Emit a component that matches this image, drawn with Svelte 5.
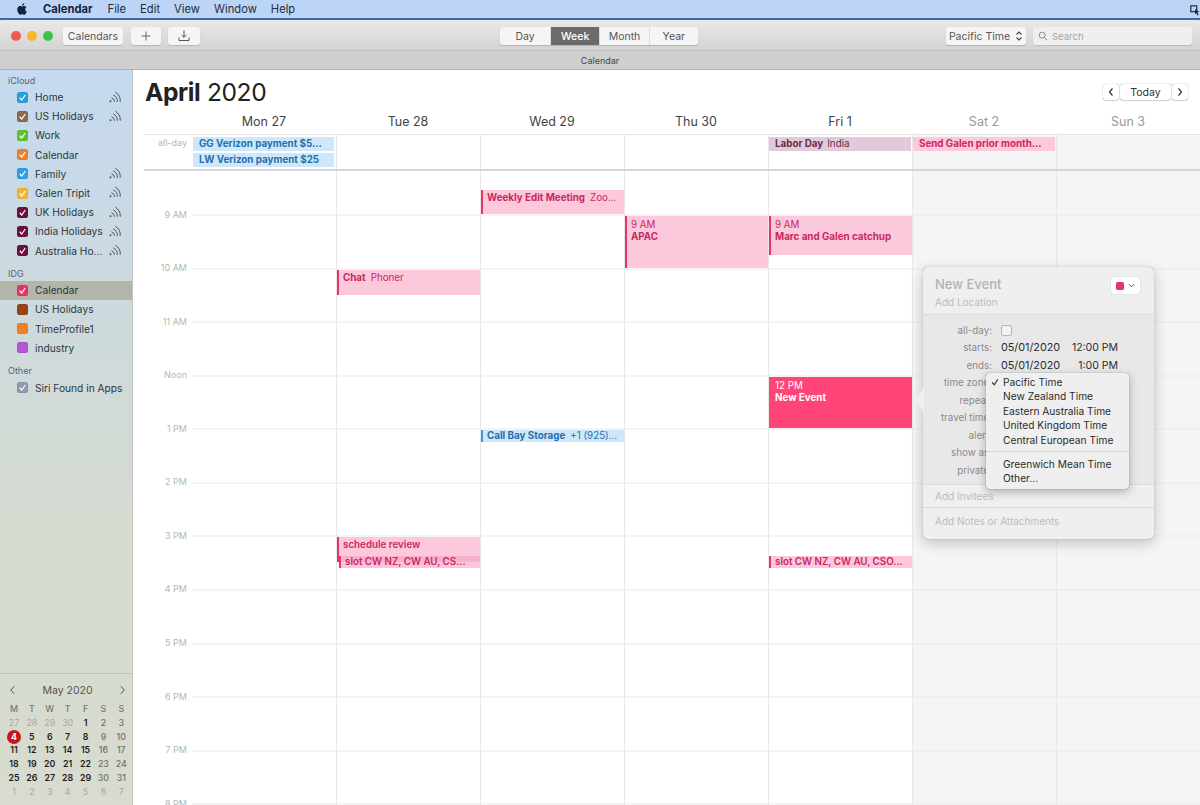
<script>
  const menus = ["File", "Edit", "View", "Window", "Help"];
  const groups = [
    { name: "iCloud", items: [
      { label: "Home", color: "#2a9fe0", on: true, feed: true },
      { label: "US Holidays", color: "#8a6a4a", on: true, feed: true },
      { label: "Work", color: "#5fc22f", on: true },
      { label: "Calendar", color: "#ee8230", on: true },
      { label: "Family", color: "#2f9fe8", on: true, feed: true },
      { label: "Galen Tripit", color: "#f3b52f", on: true, feed: true },
      { label: "UK Holidays", color: "#6d0f3f", on: true, feed: true },
      { label: "India Holidays", color: "#6d0f3f", on: true, feed: true },
      { label: "Australia Ho...", color: "#6d0f3f", on: true, feed: true }
    ]},
    { name: "IDG", items: [
      { label: "Calendar", color: "#e8336d", on: true, selected: true },
      { label: "US Holidays", color: "#9a4312" },
      { label: "TimeProfile1", color: "#f47f20" },
      { label: "industry", color: "#b455d6" }
    ]},
    { name: "Other", items: [
      { label: "Siri Found in Apps", color: "#8e9bb5", on: true }
    ]}
  ];

  const miniHead = ["M", "T", "W", "T", "F", "S", "S"];
  const miniDays = [
    27,28,29,30,1,2,3, 4,5,6,7,8,9,10, 11,12,13,14,15,16,17,
    18,19,20,21,22,23,24, 25,26,27,28,29,30,31, 1,2,3,4,5,6,7
  ];
  function miniClass(i) {
    if (i < 4 || i > 34) return "other";
    if (i === 7) return "today";
    return i % 7 > 4 ? "wknd" : "cur";
  }

  const hourLabels = ["9 AM", "10 AM", "11 AM", "Noon", "1 PM", "2 PM", "3 PM", "4 PM", "5 PM", "6 PM", "7 PM", "8 PM"];
  const HOUR = 53.57;
  const top = (h) => (h - 8) * HOUR - 10 + 1.5;

  const days = [
    { name: "Mon 27", allDay: [
      { title: "GG Verizon payment $5...", tone: "blue" },
      { title: "LW Verizon payment $25", tone: "blue" }
    ], events: [] },
    { name: "Tue 28", allDay: [], events: [
      { start: 10, h: 25, title: "Chat", note: "Phoner" },
      { start: 15, h: 25, title: "schedule review", plain: true },
      { start: 15.35, h: 12, title: "slot CW NZ, CW AU, CS...", plain: true, nested: true }
    ] },
    { name: "Wed 29", allDay: [], events: [
      { start: 8.51, h: 24, title: "Weekly Edit Meeting", note: "Zoo..." },
      { start: 13, h: 12, title: "Call Bay Storage", note: "+1 (925)...", tone: "blue", thin: true }
    ] },
    { name: "Thu 30", allDay: [], events: [
      { start: 9, h: 52, title: "APAC", time: "9 AM" }
    ] },
    { name: "Fri 1", allDay: [
      { title: "Labor Day", note: "India", tone: "plum" }
    ], events: [
      { start: 9, h: 39, title: "Marc and Galen catchup", time: "9 AM" },
      { start: 12, h: 51, title: "New Event", time: "12 PM", tone: "active" },
      { start: 15.35, h: 12, title: "slot CW NZ, CW AU, CSO...", plain: true, thin: true }
    ] },
    { name: "Sat 2", weekend: true, allDay: [
      { title: "Send Galen prior month...", tone: "pink" }
    ], events: [] },
    { name: "Sun 3", weekend: true, allDay: [], events: [] }
  ];

  const formRows = [
    { label: "all-day:", check: true },
    { label: "starts:", date: "05/01/2020", time: "12:00 PM" },
    { label: "ends:", date: "05/01/2020", time: "1:00 PM" },
    { label: "time zone:" },
    { label: "repeat:" },
    { label: "travel time:" },
    { label: "alert:" },
    { label: "show as:" },
    { label: "private:" }
  ];
  const zonesA = ["Pacific Time", "New Zealand Time", "Eastern Australia Time", "United Kingdom Time", "Central European Time"];
  const zonesB = ["Greenwich Mean Time", "Other..."];
</script>

<div class="app">
  <header class="menubar">
    <svg class="apple" viewBox="0 0 24 24"><path d="M18.71 19.5c-.83 1.24-1.71 2.45-3.05 2.47-1.34.03-1.77-.79-3.29-.79-1.53 0-2 .77-3.27.82-1.31.05-2.3-1.32-3.14-2.53C4.25 17 2.94 12.45 4.7 9.39c.87-1.52 2.43-2.48 4.12-2.51 1.28-.02 2.5.87 3.29.87.78 0 2.26-1.07 3.81-.91.65.03 2.47.26 3.64 1.98-.09.06-2.17 1.28-2.15 3.81.03 3.02 2.65 4.03 2.68 4.04-.03.07-.42 1.44-1.38 2.83M13 3.5c.73-.83 1.94-1.46 2.94-1.5.13 1.17-.34 2.35-1.04 3.19-.69.85-1.83 1.51-2.95 1.42-.15-1.15.41-2.35 1.05-3.11z"/></svg>
    <b class="appname">Calendar</b>
    {#each menus as m}
      <span>{m}</span>
    {/each}
    <svg class="tray" viewBox="0 0 12 14"><rect x="1" y="2" width="7" height="7" fill="none" stroke="#2c3e55" stroke-width="1.6"/><path d="M6 6l5 3-2 1 1.500 3-1.500.6-1.400-3L6 12z" fill="#1d2a3c"/></svg>
  </header>

  <div class="window">
    <div class="toolbar">
      <div class="lights">
        <i class="red"></i><i class="yellow"></i><i class="green"></i>
      </div>
      <button class="btn calendars">Calendars</button>
      <button class="btn icon plus" aria-label="Add">
        <svg viewBox="0 0 12 12"><path d="M6 1.500v9M1.500 6h9" stroke="#666" fill="none" stroke-width="1"/></svg>
      </button>
      <button class="btn icon dl" aria-label="Import">
        <svg viewBox="0 0 12 12"><path d="M6 .5v6.800M3.700 5L6 7.300 8.300 5M1 7.500v3h10v-3" stroke="#555" fill="none" stroke-width="1"/></svg>
      </button>
      <div class="segments">
        <span class="sday">Day</span><span class="on">Week</span><span>Month</span><span>Year</span>
      </div>
      <button class="btn zone">Pacific Time
        <svg viewBox="0 0 8 12"><path d="M1.500 4.500L4 2l2.500 2.500M1.500 7.500L4 10l2.500-2.500" stroke="#444" fill="none" stroke-width="1.100"/></svg>
      </button>
      <div class="search">
        <svg viewBox="0 0 12 12"><circle cx="5" cy="5" r="3.600" stroke="#777" fill="none"/><path d="M7.700 7.700L11 11" stroke="#777" fill="none" stroke-width="1.100"/></svg>
        Search
      </div>
    </div>
    <div class="tabbar">Calendar</div>

    <div class="content">
      <aside class="sidebar">
        {#each groups as g}
          <div class="group">{g.name}</div>
          {#each g.items as item}
            <div class="cal" class:selected={item.selected}>
              <span class="box" style="background:{item.color}">
                {#if item.on}
                  <svg viewBox="0 0 12 12"><path d="M3 6.300l2.200 2.400L9 3.300" stroke="#fff" fill="none" stroke-width="1.300"/></svg>
                {/if}
              </span>
              <span class="calname">{item.label}</span>
              {#if item.feed}
                <svg class="feed" viewBox="0 0 12 12">
                  <circle cx="1.500" cy="10.300" r="1" fill="#555"/>
                  <path d="M2.500 6.800A4 4 0 0 1 5.500 10.800M4.300 3.900A7 7 0 0 1 8.300 10.800M6.300 1.200A10 10 0 0 1 11.200 10.800" stroke="#555" fill="none" stroke-width="1"/>
                </svg>
              {/if}
            </div>
          {/each}
        {/each}

        <div class="mini">
          <div class="minititle">
            <svg viewBox="0 0 8 12"><path d="M6 1.500L2 6l4 4.500" stroke="#555" fill="none" stroke-width="1.200"/></svg>
            <span>May 2020</span>
            <svg viewBox="0 0 8 12"><path d="M2 1.500L6 6l-4 4.500" stroke="#555" fill="none" stroke-width="1.200"/></svg>
          </div>
          <div class="minigrid">
            {#each miniHead as d}
              <span class="head">{d}</span>
            {/each}
            {#each miniDays as d, i}
              <span class={miniClass(i)}>{d}</span>
            {/each}
          </div>
        </div>
      </aside>

      <main class="main">
        <div class="titlerow">
          <h1><b>April</b> 2020</h1>
          <div class="nav">
            <button aria-label="Previous"><svg viewBox="0 0 8 12"><path d="M5.500 2.500L2.500 6l3 3.500" stroke="#333" fill="none" stroke-width="1.200"/></svg></button>
            <button class="today">Today</button>
            <button aria-label="Next"><svg viewBox="0 0 8 12"><path d="M2.500 2.500L5.500 6l-3 3.500" stroke="#333" fill="none" stroke-width="1.200"/></svg></button>
          </div>
        </div>

        <div class="dayrow">
          {#each days as d}
            <div class="dayname" class:weekend={d.weekend}>{d.name}</div>
          {/each}
        </div>

        <div class="allday">
          <div class="gutterlabel">all-day</div>
          {#each days as d}
            <div class="allcol" class:weekend={d.weekend}>
              {#each d.allDay as e}
                <div class="allevent {e.tone}"><b>{e.title}</b>{#if e.note}<span>{e.note}</span>{/if}</div>
              {/each}
            </div>
          {/each}
        </div>

        <div class="timegrid">
          <div class="gutter">
            {#each hourLabels as h}
              <div class="hour">{h}</div>
            {/each}
          </div>
          {#each days as d}
            <div class="col" class:weekend={d.weekend}>
              {#each d.events as e}
                <div
                  class="event {e.tone || 'pink'}"
                  class:thin={e.thin}
                  class:nested={e.nested}
                  style="top:{top(e.start)}px;height:{e.h}px"
                >
                  {#if e.time}<div class="evtime">{e.time}</div>{/if}
                  <div class="evline" class:plain={e.plain}><b>{e.title}</b>{#if e.note}<span>{e.note}</span>{/if}</div>
                </div>
              {/each}
            </div>
          {/each}
        </div>
      </main>
    </div>
  </div>

  <section class="popover">
    <svg class="tip" viewBox="0 0 11 28"><path d="M11 0C9 4 7 9 .5 14 7 19 9 24 11 28z" fill="#efefef"/></svg>
    <div class="pophead">
      <div class="poptitle">New Event</div>
      <div class="poploc">Add Location</div>
      <div class="colorbtn">
        <i></i>
        <svg viewBox="0 0 8 6"><path d="M1 1.500L4 4.500 7 1.500" stroke="#444" fill="none" stroke-width="1.100"/></svg>
      </div>
    </div>
    <div class="form">
      {#each formRows as r}
        <div class="formrow">
          <span class="flabel">{r.label}</span>
          {#if r.check}<i class="checkbox"></i>{/if}
          {#if r.date}<span class="fdate">{r.date}</span><span class="ftime">{r.time}</span>{/if}
        </div>
      {/each}
    </div>
    <div class="popfoot">Add Invitees</div>
    <div class="popfoot last">Add Notes or Attachments</div>

    <div class="dropdown">
      {#each zonesA as z, i}
        <div class="zoneitem">{#if i === 0}<svg viewBox="0 0 10 10"><path d="M1.500 5.500L4 8.500 8.500 1.500" stroke="#222" fill="none" stroke-width="1.300"/></svg>{/if}{z}</div>
      {/each}
      <hr />
      {#each zonesB as z}
        <div class="zoneitem">{z}</div>
      {/each}
    </div>
  </section>
</div>

<style>
  :global(body) {
    margin: 0;
    font-family: Inter, "Liberation Sans", sans-serif;
    background: #bcd5f5;
  }
  button {
    font-family: inherit;
  }
  .app {
    position: relative;
    width: 1200px;
    height: 805px;
    overflow: hidden;
    display: flex;
    flex-direction: column;
    background: #bcd5f5;
  }

  /* menu bar */
  .menubar {
    height: 18px;
    flex: none;
    display: flex;
    align-items: center;
    gap: 14px;
    padding-left: 15px;
    font-size: 11.200px;
    color: #1f2d42;
    background: #bcd5f6;
    border-bottom: 2px solid #3f68ab;
  }
  .apple {
    width: 14px;
    height: 14px;
    fill: #16233a;
  }
  .appname {
    font-weight: 700;
    color: #14233c;
    margin-right: 1px;
  }
  .tray {
    position: absolute;
    right: 0;
    top: 4px;
    width: 10px;
    height: 12px;
  }

  /* window */
  .window {
    flex: 1;
    min-height: 0;
    display: flex;
    flex-direction: column;
    border-radius: 4px 4px 0 0;
    overflow: hidden;
    background: #fff;
  }
  .toolbar {
    height: 31px;
    flex: none;
    box-sizing: border-box;
    display: flex;
    align-items: center;
    padding: 2px 8px 0 11px;
    background: linear-gradient(#e9e9e9, #d3d3d3);
    border-bottom: 1px solid #bdbdbd;
  }
  .lights {
    display: flex;
    gap: 6px;
    margin-right: 10px;
  }
  .lights i {
    width: 10px;
    height: 10px;
    border-radius: 50%;
  }
  .red { background: #ee5a52; }
  .yellow { background: #f5b62e; }
  .green { background: #3fc14a; }
  .btn {
    height: 18px;
    border: 0;
    border-radius: 3px;
    background: #f5f5f5;
    box-shadow: 0 1px 1px rgba(0,0,0,.16);
    font-size: 10.500px;
    color: #555;
    padding: 0;
    display: flex;
    align-items: center;
    justify-content: center;
  }
  .calendars { width: 60px; }
  .icon svg { width: 12px; height: 12px; }
  .plus { width: 30px; margin-left: 8px; }
  .dl { width: 32px; margin-left: 7px; }
  .segments {
    margin-left: 300px;
    display: flex;
    height: 18px;
    width: 198px;
    border-radius: 3px;
    overflow: hidden;
    background: #f5f5f5;
    box-shadow: 0 1px 1px rgba(0,0,0,.16);
    font-size: 10.500px;
    color: #555;
  }
  .segments span {
    flex: 1;
    display: flex;
    align-items: center;
    justify-content: center;
    border-right: 1px solid #dcdcdc;
  }
  .segments span:last-child { border-right: 0; }
  .segments .sday { flex: none; width: 51px; box-sizing: border-box; }
  .segments .on {
    background: #6b6b6b;
    color: #fff;
    font-weight: 500;
  }
  .zone {
    width: 80px;
    margin-left: 248px;
    gap: 5px;
  }
  .zone svg { width: 8px; height: 12px; }
  .search {
    width: 159px;
    height: 18px;
    margin-left: 7px;
    box-sizing: border-box;
    display: flex;
    align-items: center;
    gap: 4px;
    padding-left: 5px;
    border-radius: 3px;
    background: #efefef;
    box-shadow: 0 1px 1px rgba(0,0,0,.12);
    font-size: 9.500px;
    color: #a5a5a5;
  }
  .search svg { width: 10px; height: 10px; }
  .tabbar {
    height: 18px;
    flex: none;
    display: flex;
    align-items: center;
    justify-content: center;
    font-size: 9px;
    color: #444;
    background: #cfcfcf;
    border-bottom: 1px solid #b0b0b0;
  }
  .content {
    flex: 1;
    min-height: 0;
    display: flex;
  }

  /* sidebar */
  .sidebar {
    width: 133px;
    flex: none;
    box-sizing: border-box;
    padding-top: 3.500px;
    display: flex;
    flex-direction: column;
    background: linear-gradient(#c5daf0 0, #cdd9dd 240px, #d5dbd0 450px, #d8dbcf 100%);
    border-right: 1px solid #c4c4c0;
    color: #2c3540;
  }
  .group {
    height: 14px;
    line-height: 14px;
    padding-left: 8px;
    font-size: 9px;
    color: #5a6470;
    margin-top: 6.500px;
  }
  .group:first-child { margin-top: 0; }
  .cal {
    height: 19.200px;
    flex: none;
    display: flex;
    align-items: center;
    padding-left: 17px;
    font-size: 10.200px;
    position: relative;
  }
  .cal.selected { background: #b4b5a9; }
  .box {
    width: 11px;
    height: 11px;
    flex: none;
    border-radius: 2.500px;
    margin-right: 7px;
    display: flex;
    box-shadow: inset 0 0 0 1px rgba(0,0,0,.05);
  }
  .box svg { width: 11px; height: 11px; }
  .calname { white-space: nowrap; }
  .feed {
    position: absolute;
    left: 109px;
    top: 3px;
    width: 12px;
    height: 12px;
  }

  /* mini month */
  .mini {
    margin-top: auto;
    height: 132px;
    box-sizing: border-box;
    border-top: 1px solid #c2c4b8;
    padding: 8px 0 0 5px;
  }
  .minititle {
    height: 16px;
    width: 125px;
    padding: 0 4px;
    box-sizing: border-box;
    display: flex;
    align-items: center;
    justify-content: space-between;
    font-size: 10.500px;
    color: #555;
    margin-bottom: 4px;
  }
  .minititle svg { width: 7px; height: 10px; }
  .minigrid {
    display: grid;
    grid-template-columns: repeat(7, 17.900px);
    grid-auto-rows: 13.800px;
    font-size: 8.800px;
    text-align: center;
    line-height: 13.800px;
  }
  .minigrid .head { color: #777; font-weight: 500; }
  .minigrid .cur { color: #1c1c1c; font-weight: 600; }
  .minigrid .wknd { color: #6f6f6f; font-weight: 500; }
  .minigrid .other { color: #a8a8a2; }
  .minigrid .today {
    justify-self: center;
    width: 14px;
    height: 14px;
    line-height: 14px;
    border-radius: 50%;
    background: #c8161d;
    color: #fff;
    font-weight: 700;
  }

  /* calendar */
  .main {
    flex: 1;
    min-width: 0;
    display: flex;
    flex-direction: column;
  }
  .titlerow {
    height: 38px;
    flex: none;
    display: flex;
    justify-content: space-between;
    align-items: flex-start;
    padding: 0 12px;
  }
  h1 {
    margin: 6px 0 0;
    font-size: 24.600px;
    line-height: 32px;
    font-weight: 400;
    color: #222;
    letter-spacing: -.4px;
  }
  h1 b { font-weight: 700; }
  .nav {
    display: flex;
    gap: 1px;
    margin-top: 14px;
  }
  .nav button {
    width: 16px;
    height: 16px;
    padding: 0;
    border: 0;
    border-radius: 3px;
    background: #fff;
    box-shadow: 0 0 1px rgba(0,0,0,.5), 0 1px 1px rgba(0,0,0,.15);
    font-size: 10.500px;
    color: #333;
    display: flex;
    align-items: center;
    justify-content: center;
  }
  .nav svg { width: 8px; height: 12px; }
  .nav .today { width: 51px; }
  .dayrow {
    height: 26px;
    flex: none;
    display: flex;
    padding-left: 59px;
  }
  .dayname {
    width: 144px;
    text-align: center;
    font-size: 12.500px;
    line-height: 27px;
    color: #444;
  }
  .dayname.weekend { color: #999; }
  .allday {
    height: 34px;
    flex: none;
    display: flex;
    margin-left: 11px;
    border-top: 1px solid #e6e6e6;
    border-bottom: 2px solid #d4d4d4;
  }
  .gutterlabel {
    width: 48px;
    flex: none;
    text-align: right;
    padding-right: 5px;
    box-sizing: border-box;
    font-size: 9px;
    line-height: 16px;
    color: #b5b5b5;
  }
  .allcol {
    width: 144px;
    flex: none;
    box-sizing: border-box;
    padding: 2px 1px 0 0;
    display: flex;
    flex-direction: column;
    gap: 2px;
    border-left: 1px solid #e8e8e8;
  }
  .gutterlabel + .allcol {
    border-left: 0;
    padding: 2px 2px 0 1px;
  }
  .allcol.weekend, .col.weekend { background-color: #f5f5f5; }
  .allevent {
    height: 14px;
    line-height: 14px;
    padding-left: 6px;
    font-size: 9.800px;
    white-space: nowrap;
    overflow: hidden;
  }
  .allevent span { font-weight: 400; margin-left: 4px; }
  .allevent.blue { background: #cfe7fb; color: #2470aa; }
  .allevent.plum { background: #e1cbd8; color: #6a2b50; }
  .allevent.pink { background: #fbc8dc; color: #c9285f; }

  .timegrid {
    flex: 1;
    min-height: 0;
    display: flex;
    overflow: hidden;
  }
  .gutter {
    width: 59px;
    flex: none;
    box-sizing: border-box;
    padding-top: 36.500px;
  }
  .hour {
    height: 53.570px;
    line-height: 14px;
    text-align: right;
    padding-right: 5px;
    font-size: 9px;
    color: #b5b5b5;
  }
  .col {
    width: 144px;
    flex: none;
    box-sizing: border-box;
    position: relative;
    border-left: 1px solid #e8e8e8;
    background-image: repeating-linear-gradient(to bottom, #e9e9e9 0, #e9e9e9 1px, transparent 1px, transparent 53.570px);
    background-position: 0 43.500px;
  }
  .gutter + .col { border-left: 0; }
  .event {
    position: absolute;
    left: 0;
    right: 0;
    box-sizing: border-box;
    padding: 2px 0 0 4px;
    border-left: 2px solid;
    font-size: 9.800px;
    line-height: 12px;
    white-space: nowrap;
    overflow: hidden;
  }
  .event.pink { background: #fbc8dc; color: #c9285f; border-color: #e8336d; }
  .event.blue { background: #cfe7fb; color: #2470aa; border-color: #3a9ae0; }
  .event.active { background: #ff4477; color: #fff; border-color: #ff4477; }
  .event.thin { padding-top: 0; }
  .event.nested {
    left: 2px;
    padding-top: 0;
    background: rgba(248,160,195,.6);
  }
  .evline span { margin-left: 5px; font-weight: 400; }
  .evline.plain b { font-weight: 600; }
  .evtime { font-weight: 400; margin-top: 1px; }

  /* popover */
  .popover {
    position: absolute;
    left: 923px;
    top: 267px;
    width: 231px;
    height: 272px;
    box-sizing: border-box;
    border-radius: 5px;
    background: #efefef;
    box-shadow: 0 0 1px rgba(0,0,0,.45), 0 4px 14px rgba(0,0,0,.22);
    display: flex;
    flex-direction: column;
  }
  .tip {
    position: absolute;
    left: -10px;
    top: 119px;
    width: 11px;
    height: 28px;
  }
  .pophead {
    height: 48px;
    flex: none;
    box-sizing: border-box;
    position: relative;
    padding: 10px 0 0 12px;
    border-bottom: 1px solid #dcdcdc;
  }
  .poptitle {
    font-size: 13px;
    line-height: 15px;
    font-weight: 500;
    color: #b2b2b2;
  }
  .poploc {
    font-size: 10px;
    line-height: 13px;
    margin-top: 4px;
    color: #bcbcbc;
  }
  .colorbtn {
    position: absolute;
    left: 188px;
    top: 10px;
    width: 29px;
    height: 17px;
    border-radius: 3px;
    background: #fff;
    box-shadow: 0 0 1px rgba(0,0,0,.35);
    display: flex;
    align-items: center;
    justify-content: center;
    gap: 4px;
  }
  .colorbtn i {
    width: 8px;
    height: 8px;
    border-radius: 1.500px;
    background: #e8336d;
  }
  .colorbtn svg { width: 7px; height: 5px; }
  .form {
    height: 170px;
    flex: none;
    box-sizing: border-box;
    padding-top: 6.500px;
    background: #e8e8e8;
    border-bottom: 1px solid #dcdcdc;
  }
  .formrow {
    height: 17.500px;
    display: flex;
    align-items: center;
    font-size: 9.800px;
    color: #8a8a8a;
  }
  .flabel {
    width: 69px;
    flex: none;
    text-align: right;
    white-space: nowrap;
  }
  .checkbox {
    width: 9px;
    height: 9px;
    margin-left: 9px;
    border: 1px solid #b5b5b5;
    border-radius: 2px;
    background: #f2f2f2;
  }
  .fdate {
    margin-left: 9px;
    width: 60px;
    color: #2c2c2c;
    font-size: 10.800px;
  }
  .ftime {
    width: 57px;
    text-align: right;
    color: #2c2c2c;
    font-size: 10.500px;
  }
  .popfoot {
    height: 23px;
    flex: none;
    box-sizing: border-box;
    padding-left: 12px;
    font-size: 10px;
    line-height: 22px;
    color: #bcbcbc;
    border-bottom: 1px solid #dcdcdc;
  }
  .popfoot.last {
    border-bottom: 0;
    flex: 1;
    line-height: 26px;
  }
  .dropdown {
    position: absolute;
    left: 63px;
    top: 106px;
    width: 143px;
    height: 116px;
    box-sizing: border-box;
    padding-top: 2px;
    border-radius: 4px;
    background: #efefef;
    box-shadow: 0 0 1px rgba(0,0,0,.5), 0 3px 10px rgba(0,0,0,.28);
  }
  .dropdown hr {
    margin: 4.500px 0;
    border: 0;
    border-top: 1px solid #d5d5d5;
  }
  .zoneitem {
    height: 14.400px;
    line-height: 14.400px;
    padding-left: 17px;
    position: relative;
    font-size: 10.200px;
    color: #2b2b2b;
    white-space: nowrap;
  }
  .zoneitem svg {
    position: absolute;
    left: 5px;
    top: 3px;
    width: 8px;
    height: 8px;
  }
</style>
